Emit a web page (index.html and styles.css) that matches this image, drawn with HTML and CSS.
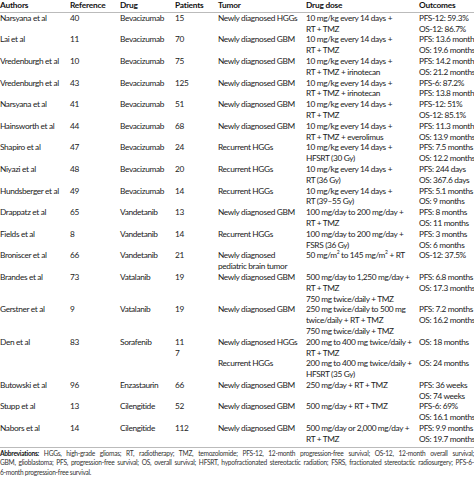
FILE: index.html
```html
<!DOCTYPE html>
<html>
<head>
<meta charset="utf-8">
<link rel="stylesheet" href="styles.css">
</head>
<body>
<div class="page">
<table class="tbl">
<colgroup>
<col class="c1"><col class="c2"><col class="c3"><col class="c4"><col class="c5"><col class="c6"><col class="c7">
</colgroup>
<thead>
<tr><th>Authors</th><th>Reference</th><th>Drug</th><th>Patients</th><th>Tumor</th><th>Drug dose</th><th>Outcomes</th></tr>
</thead>
<tbody>
<tr><td>Narsyana et al</td><td>40</td><td>Bevacizumab</td><td>15</td><td>Newly diagnosed HGGs</td><td>10 mg/kg every 14 days +<br>RT + TMZ</td><td>PFS-12: 59.3%<br>OS-12: 86.7%</td></tr>
<tr><td>Lai et al</td><td>11</td><td>Bevacizumab</td><td>70</td><td>Newly diagnosed GBM</td><td>10 mg/kg every 14 days +<br>RT + TMZ</td><td>PFS: 13.6 months<br>OS: 19.6 months</td></tr>
<tr><td>Vredenburgh et al</td><td>10</td><td>Bevacizumab</td><td>75</td><td>Newly diagnosed GBM</td><td>10 mg/kg every 14 days +<br>RT + TMZ + irinotecan</td><td>PFS: 14.2 months<br>OS: 21.2 months</td></tr>
<tr><td>Vredenburgh et al</td><td>43</td><td>Bevacizumab</td><td>125</td><td>Newly diagnosed GBM</td><td>10 mg/kg every 14 days +<br>RT + TMZ + irinotecan</td><td>PFS-6: 87.2%<br>PFS: 13.8 months</td></tr>
<tr><td>Narsyana et al</td><td>41</td><td>Bevacizumab</td><td>51</td><td>Newly diagnosed GBM</td><td>10 mg/kg every 14 days +<br>RT + TMZ</td><td>PFS-12: 51%<br>OS-12: 85.1%</td></tr>
<tr><td>Hainsworth et al</td><td>44</td><td>Bevacizumab</td><td>68</td><td>Newly diagnosed GBM</td><td>10 mg/kg every 14 days +<br>RT + TMZ + everolimus</td><td>PFS: 11.3 months<br>OS: 13.9 months</td></tr>
<tr><td>Shapiro et al</td><td>47</td><td>Bevacizumab</td><td>24</td><td>Recurrent HGGs</td><td>10 mg/kg every 14 days +<br>HFSRT (30 Gy)</td><td>PFS: 7.5 months<br>OS: 12.2 months</td></tr>
<tr><td>Niyazi et al</td><td>48</td><td>Bevacizumab</td><td>20</td><td>Recurrent HGGs</td><td>10 mg/kg every 14 days +<br>RT (36 Gy)</td><td>PFS: 244 days<br>OS: 367.6 days</td></tr>
<tr><td>Hundsberger et al</td><td>49</td><td>Bevacizumab</td><td>14</td><td>Recurrent HGGs</td><td>10 mg/kg every 14 days +<br>RT (39–55 Gy)</td><td>PFS: 5.1 months<br>OS: 9 months</td></tr>
<tr><td>Drappatz et al</td><td>65</td><td>Vandetanib</td><td>13</td><td>Newly diagnosed GBM</td><td>100 mg/day to 200 mg/day +<br>RT + TMZ</td><td>PFS: 8 months<br>OS: 11 months</td></tr>
<tr><td>Fields et al</td><td>8</td><td>Vandetanib</td><td>14</td><td>Recurrent HGGs</td><td>100 mg/day to 200 mg/day +<br>FSRS (36 Gy)</td><td>PFS: 3 months<br>OS: 6 months</td></tr>
<tr><td>Broniscer et al</td><td>66</td><td>Vandetanib</td><td>21</td><td>Newly diagnosed<br>pediatric brain tumor</td><td>50 mg/m<sup>2</sup> to 145 mg/m<sup>2</sup> + RT</td><td>OS-12: 37.5%</td></tr>
<tr><td>Brandes et al</td><td>73</td><td>Vatalanib</td><td>19</td><td>Newly diagnosed GBM</td><td>500 mg/day to 1,250 mg/day +<br>RT + TMZ<br>750 mg twice/daily + TMZ</td><td>PFS: 6.8 months<br>OS: 17.3 months</td></tr>
<tr><td>Gerstner et al</td><td>9</td><td>Vatalanib</td><td>19</td><td>Newly diagnosed GBM</td><td>250 mg twice/daily to 500 mg<br>twice/daily + RT + TMZ<br>750 mg twice/daily + TMZ</td><td>PFS: 7.2 months<br>OS: 16.2 months</td></tr>
<tr><td>Den et al</td><td>83</td><td>Sorafenib</td><td>11<br>7</td><td>Newly diagnosed HGGs<br>&nbsp;<br>Recurrent HGGs</td><td>200 mg to 400 mg twice/daily +<br>RT + TMZ<br>200 mg to 400 mg twice/daily +<br>HFSRT (35 Gy)</td><td>OS: 18 months<br>&nbsp;<br>OS: 24 months</td></tr>
<tr><td>Butowski et al</td><td>96</td><td>Enzastaurin</td><td>66</td><td>Newly diagnosed GBM</td><td>250 mg/day + RT + TMZ</td><td>PFS: 36 weeks<br>OS: 74 weeks</td></tr>
<tr><td>Stupp et al</td><td>13</td><td>Cilengitide</td><td>52</td><td>Newly diagnosed GBM</td><td>500 mg/day + RT + TMZ</td><td>PFS-6: 69%<br>OS: 16.1 months</td></tr>
<tr><td>Nabors et al</td><td>14</td><td>Cilengitide</td><td>112</td><td>Newly diagnosed GBM</td><td>500 mg/day or 2,000 mg/day +<br>RT + TMZ</td><td>PFS: 9.9 months<br>OS: 19.7 months</td></tr>
</tbody>
</table>
<div class="notes">
<div class="nl"><b>Abbreviations:</b> HGGs, high-grade gliomas; RT, radiotherapy; TMZ, temozolomide; PFS-12, 12-month progression-free survival; OS-12, 12-month overall survival;</div>
<div class="nl">GBM, glioblastoma; PFS, progression-free survival; OS, overall survival; HFSRT, hypofractionated stereotactic radiation; FSRS, fractionated stereotactic radiosurgery; PFS-6-</div>
<div class="nl last">6-month progression-free survival.</div>
</div>
</div>
</body>
</html>
```
FILE: styles.css
```css
html, body {
  margin: 0;
  padding: 0;
  overflow: hidden;
  background: #fff;
}
.page {
  width: 474px;
  font-family: Lato, "Open Sans", sans-serif;
  color: #222;
}
.tbl {
  border-collapse: collapse;
  table-layout: fixed;
  width: 560px;
  font-size: 8.3px;
  letter-spacing: -0.35px;
  line-height: 10.8px;
}
.c1 { width: 70px; }
.c2 { width: 50px; }
.c3 { width: 55px; }
.c4 { width: 43px; }
.c5 { width: 88px; }
.c6 { width: 113px; }
.c7 { width: 141px; }
.tbl th {
  text-align: left;
  font-weight: 700;
  color: #111;
  letter-spacing: -0.2px;
  padding: 0 0 1px 0;
  border-bottom: 1px solid #bbb;
  white-space: nowrap;
}
.tbl td {
  padding: 0;
  vertical-align: top;
  white-space: nowrap;
}
.tbl sup {
  font-size: 5px;
  line-height: 0;
}
.notes {
  border-top: 1px solid #bbb;
  margin-top: 2px;
  padding-top: 1px;
  width: 474px;
  font-size: 6.6px;
  letter-spacing: -0.25px;
  line-height: 9.6px;
  color: #333;
}
.nl {
  text-align: justify;
  text-align-last: justify;
  white-space: nowrap;
}
.nl.last {
  text-align-last: left;
}
.notes b { font-weight: 700; color: #111; }
```
